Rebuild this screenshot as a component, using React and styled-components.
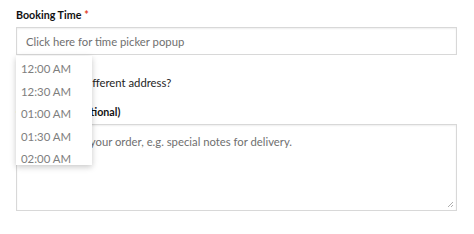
import React from 'react';
import styled, { createGlobalStyle } from 'styled-components';

const GlobalStyle = createGlobalStyle`
  html, body {
    margin: 0;
    padding: 0;
    background: #fff;
    font-family: 'Lato', 'Liberation Sans', sans-serif;
    color: #333;
  }
`;

const Form = styled.div`
  width: 441px;
  padding: 8px 17px 0 16px;
  display: flex;
  flex-direction: column;
`;

const Field = styled.div`
  position: relative;
  display: flex;
  flex-direction: column;
`;

const Label = styled.label`
  font-size: 10.7px;
  font-weight: 700;
  color: #111;
  line-height: 13px;
  margin-bottom: 6px;
`;

const Required = styled.span`
  color: #e2401c;
  margin-left: 3px;
`;

const Input = styled.div`
  height: 28px;
  box-sizing: border-box;
  border: 1px solid #d8d8d8;
  box-shadow: inset 0 1px 2px rgba(0, 0, 0, 0.07);
  display: flex;
  align-items: center;
  padding: 0 9px;
  font-size: 11.3px;
  color: #6f6f6f;
`;

const Dropdown = styled.ul`
  position: absolute;
  top: 48px;
  left: 0;
  width: 76px;
  height: 109px;
  margin: 0;
  padding: 2px 0 0;
  box-sizing: border-box;
  list-style: none;
  background: #fff;
  box-shadow: 0 2px 6px rgba(0, 0, 0, 0.22);
  overflow: hidden;
  z-index: 5;
`;

const Option = styled.li`
  font-size: 11.4px;
  color: #7e7e7e;
  line-height: 22.5px;
  padding-left: 5px;
`;

const Ship = styled.label`
  display: flex;
  align-items: center;
  gap: 8px;
  font-size: 11.3px;
  color: #1e1e1e;
  margin-top: 20px;
  line-height: 16px;
`;

const Check = styled.input`
  margin: 0;
  width: 13px;
  height: 13px;
`;

const Notes = styled(Field)`
  margin-top: 14px;
`;

const TextArea = styled.div`
  height: 87px;
  box-sizing: border-box;
  border: 1px solid #d8d8d8;
  box-shadow: inset 0 1px 2px rgba(0, 0, 0, 0.07);
  padding: 9px 9px;
  font-size: 11.3px;
  line-height: 16px;
  color: #6f6f6f;
  position: relative;
`;

const Grip = styled.svg`
  position: absolute;
  right: 2px;
  bottom: 2px;
`;

const times = ['12:00 AM', '12:30 AM', '01:00 AM', '01:30 AM', '02:00 AM', '02:30 AM'];

export default function App() {
  return (
    <>
      <GlobalStyle />
      <Form>
        <Field>
          <Label>
            Booking Time<Required>*</Required>
          </Label>
          <Input>Click here for time picker popup</Input>
          <Dropdown>
            {times.map((t) => (
              <Option key={t}>{t}</Option>
            ))}
          </Dropdown>
        </Field>
        <Ship>
          <Check type="checkbox" />
          Ship to a different address?
        </Ship>
        <Notes>
          <Label>Order notes (optional)</Label>
          <TextArea>
            Notes about your order, e.g. special notes for delivery.
            <Grip width="7" height="7" viewBox="0 0 7 7">
              <path d="M6 1L1 6M6 4L4 6" stroke="#999" strokeWidth="0.8" />
            </Grip>
          </TextArea>
        </Notes>
      </Form>
    </>
  );
}
